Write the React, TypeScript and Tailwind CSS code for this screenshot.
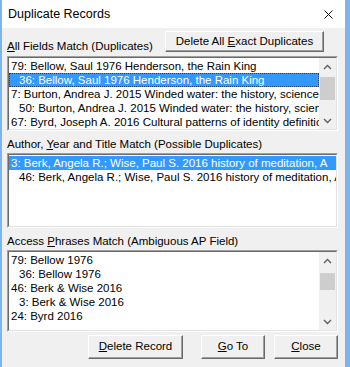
import React from 'react';

type Row = { text: string; child?: boolean; selected?: boolean; focus?: boolean };

const fieldRows: Row[] = [
  { text: '79: Bellow, Saul 1976 Henderson, the Rain King' },
  { text: '36: Bellow, Saul 1976 Henderson, the Rain King', child: true, selected: true, focus: true },
  { text: '7: Burton, Andrea J. 2015 Winded water: the history, science and technology' },
  { text: '50: Burton, Andrea J. 2015 Winded water: the history, science and technology', child: true },
  { text: '67: Byrd, Joseph A. 2016 Cultural patterns of identity definition' },
];

const titleRows: Row[] = [
  { text: '3: Berk, Angela R.; Wise, Paul S. 2016 history of meditation, A', selected: true },
  { text: '46: Berk, Angela R.; Wise, Paul S. 2016 history of meditation, A', child: true },
];

const phraseRows: Row[] = [
  { text: '79: Bellow 1976' },
  { text: '36: Bellow 1976', child: true },
  { text: '46: Berk & Wise 2016' },
  { text: '3: Berk & Wise 2016', child: true },
  { text: '24: Byrd 2016' },
];

function Chevron({ up }: { up?: boolean }) {
  return (
    <svg width="9" height="6" viewBox="0 0 9 6" className="block">
      <path
        d={up ? 'M1 5 L4.5 1.5 L8 5' : 'M1 1 L4.5 4.5 L8 1'}
        fill="none"
        stroke="#606060"
        strokeWidth="1.4"
      />
    </svg>
  );
}

// vertical scrollbar, thumb position given in px from the top of the track
function ScrollBar({ thumbTop, thumbH }: { thumbTop: number; thumbH: number }) {
  return (
    <div className="w-[17px] h-full bg-[#f0f0f0] flex flex-col shrink-0">
      <div className="h-[17px] flex items-center justify-center">
        <Chevron up />
      </div>
      <div className="flex-1 relative">
        <div className="absolute left-[1px] right-[1px] bg-[#cdcdcd]" style={{ top: thumbTop, height: thumbH }} />
      </div>
      <div className="h-[17px] flex items-center justify-center">
        <Chevron />
      </div>
    </div>
  );
}

function ListBox({ rows, height, scroll }: { rows: Row[]; height: string; scroll?: { top: number; h: number } }) {
  return (
    <div className={`${height} border border-t-[#a0a0a0] border-l-[#a0a0a0] border-b-white border-r-white`}>
      <div className="h-full border border-t-[#696969] border-l-[#696969] border-b-[#e3e3e3] border-r-[#e3e3e3] bg-white flex">
        <div className="flex-1 min-w-0 overflow-hidden pt-[1px]">
          {rows.map((r, i) => (
            <div
              key={i}
              className={`h-[14px] leading-[14px] whitespace-nowrap overflow-hidden ${r.child ? 'pl-[10px]' : 'pl-[2px]'} ${
                r.selected ? 'bg-[#3399ff] text-white' : 'text-black'
              } ${r.focus ? 'outline-1 outline-dotted outline-[#1c3f6e] -outline-offset-1' : ''}`}
            >
              {r.text}
            </div>
          ))}
        </div>
        {scroll && <ScrollBar thumbTop={scroll.top} thumbH={scroll.h} />}
      </div>
    </div>
  );
}

function Button({ width, children, height = 'h-[24px]' }: { width: string; children: React.ReactNode; height?: string }) {
  return (
    <button
      className={`${width} ${height} border border-t-white border-l-white border-b-[#696969] border-r-[#696969] bg-[#f0f0f0] shadow-[inset_-1px_-1px_0_#a0a0a0] text-black flex items-center justify-center`}
    >
      {children}
    </button>
  );
}

export default function App() {
  return (
    <div className="w-[350px] h-[367px] bg-[#7eb4ea] overflow-hidden text-[12px]" style={{ fontFamily: '"Liberation Sans", Arial, sans-serif' }}>
      <div className="ml-[2px] w-[343px] h-full flex flex-col">
        {/* Title bar */}
        <div className="h-[28px] bg-white flex items-center pl-[6px] pr-[12px] shrink-0">
          <span className="text-[12.5px] text-black">Duplicate Records</span>
          <svg width="9" height="9" viewBox="0 0 9 9" className="ml-auto">
            <path d="M0.5 0.5 L8.5 8.5 M8.5 0.5 L0.5 8.5" stroke="#111" strokeWidth="1" />
          </svg>
        </div>

        {/* Body */}
        <div className="flex-1 bg-[#f0f0f0] pl-[5px] pr-[7px] flex flex-col text-[11.5px]">
          <div className="h-[28px] flex items-end pb-[4px]">
            <span className="leading-[13px] mb-[-1px]">
              <u>A</u>ll Fields Match (Duplicates)
            </span>
            <div className="ml-auto mr-[14px]">
              <Button width="w-[159px]" height="h-[21px]">
                <span>
                  Delete All <u>E</u>xact Duplicates
                </span>
              </Button>
            </div>
          </div>

          <ListBox rows={fieldRows} height="h-[75px]" scroll={{ top: 2, h: 23 }} />

          <div className="h-[22px] flex items-end pb-[2px]">
            <span className="leading-[13px]">
              Author, <u>Y</u>ear and Title Match (Possible Duplicates)
            </span>
          </div>

          <ListBox rows={titleRows} height="h-[75px]" />

          <div className="h-[22px] flex items-end pb-[2px]">
            <span className="leading-[13px]">
              Access <u>P</u>hrases Match (Ambiguous AP Field)
            </span>
          </div>

          <ListBox rows={phraseRows} height="h-[82px]" scroll={{ top: 4, h: 17 }} />

          <div className="mt-[3px] flex justify-end">
            <Button width="w-[95px]">
              <span>
                <u>D</u>elete Record
              </span>
            </Button>
            <div className="w-[18px]" />
            <Button width="w-[64px]">
              <span>
                <u>G</u>o To
              </span>
            </Button>
            <div className="w-[9px]" />
            <Button width="w-[64px]">
              <span>
                <u>C</u>lose
              </span>
            </Button>
          </div>
        </div>
      </div>
    </div>
  );
}
